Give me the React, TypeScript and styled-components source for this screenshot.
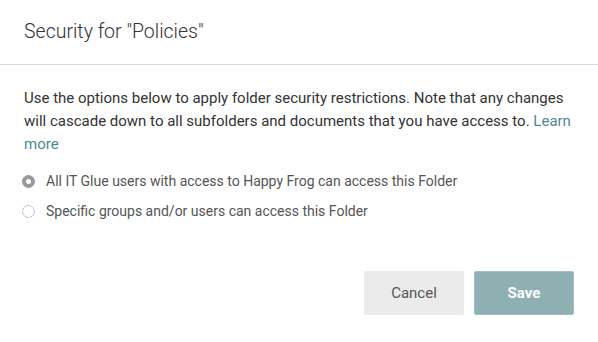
import React from "react";
import styled, { createGlobalStyle } from "styled-components";

const GlobalStyle = createGlobalStyle`
  html, body { margin: 0; padding: 0; background: #fff; }
  body { font-family: Roboto, "Noto Sans", "Liberation Sans", sans-serif; -webkit-font-smoothing: antialiased; }
  * { box-sizing: border-box; }
`;

const Dialog = styled.div`
  width: 598px;
  height: 342px;
  background: #fff;
  display: flex;
  flex-direction: column;
`;

const Header = styled.div`
  padding: 20px 24px 20px;
  border-bottom: 1px solid #dcdcdc;
`;

const Title = styled.h2`
  margin: 0;
  font-size: 19.5px;
  line-height: 24px;
  font-weight: 300;
  color: #333;
`;

const Body = styled.div`
  padding: 22px 24px 0;
`;

const Text = styled.p`
  margin: 0;
  font-size: 15px;
  line-height: 23px;
  color: #333;
`;

const Link = styled.a`
  color: #4f8a8e;
  text-decoration: none;
`;

const Options = styled.div`
  margin-top: 10px;
  display: flex;
  flex-direction: column;
`;

const OptionRow = styled.label`
  display: flex;
  align-items: center;
  gap: 11px;
  height: 30px;
  font-size: 14px;
  color: #555;
`;

const Radio = styled.span<{ $checked?: boolean }>`
  width: 13px;
  height: 13px;
  border-radius: 50%;
  margin-left: -2px;
  flex: none;
  display: flex;
  align-items: center;
  justify-content: center;
  background: ${(p) => (p.$checked ? "#999" : "#fff")};
  border: 1px solid ${(p) => (p.$checked ? "#999" : "#c4c4c4")};
  &::after {
    content: "";
    display: ${(p) => (p.$checked ? "block" : "none")};
    width: 5px;
    height: 5px;
    border-radius: 50%;
    background: #fff;
  }
`;

const Footer = styled.div`
  margin-top: 45px;
  padding: 0 24px;
  display: flex;
  justify-content: flex-end;
  gap: 10px;
`;

const Button = styled.button<{ $primary?: boolean }>`
  width: 100px;
  height: 44px;
  border-radius: 2px;
  font-family: inherit;
  font-size: 15px;
  cursor: pointer;
  border: 1px solid ${(p) => (p.$primary ? "#a3bfc1" : "#ebebeb")};
  background: ${(p) => (p.$primary ? "#8fb0b3" : "#ebebeb")};
  color: ${(p) => (p.$primary ? "#fff" : "#555")};
  font-weight: ${(p) => (p.$primary ? 700 : 400)};
`;

export default function App() {
  return (
    <>
      <GlobalStyle />
      <Dialog>
        <Header>
          <Title>Security for "Policies"</Title>
        </Header>
        <Body>
          <Text>
            Use the options below to apply folder security restrictions. Note that any changes will
            cascade down to all subfolders and documents that you have access to.{" "}
            <Link href="#">Learn more</Link>
          </Text>
          <Options>
            <OptionRow>
              <Radio $checked />
              All IT Glue users with access to Happy Frog can access this Folder
            </OptionRow>
            <OptionRow>
              <Radio />
              Specific groups and/or users can access this Folder
            </OptionRow>
          </Options>
        </Body>
        <Footer>
          <Button>Cancel</Button>
          <Button $primary>Save</Button>
        </Footer>
      </Dialog>
    </>
  );
}
